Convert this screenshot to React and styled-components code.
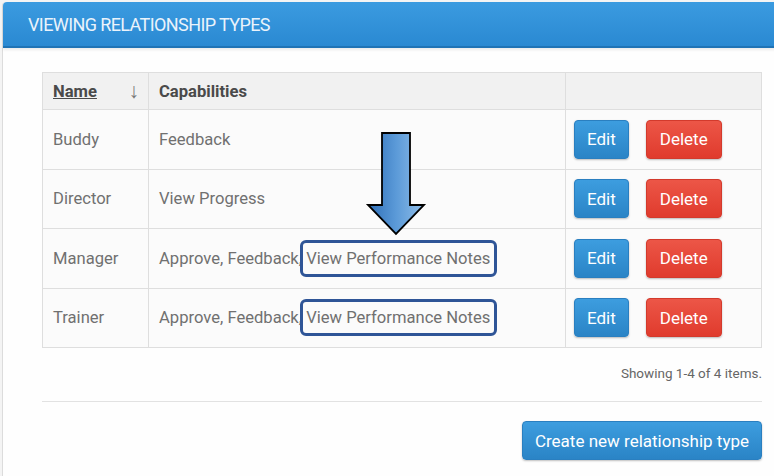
import React from "react";
import styled, { createGlobalStyle } from "styled-components";

const Global = createGlobalStyle`
  html, body { margin: 0; padding: 0; background: #f4f4f4; overflow: hidden; }
  body { font-family: Roboto, "Liberation Sans", sans-serif; }
`;

const Page = styled.div`
  width: 774px;
  height: 476px;
  overflow: hidden;
  padding: 2px 0 0 2px;
  box-sizing: border-box;
  position: relative;
`;

const Panel = styled.div`
  width: 800px;
  background: #fefefe;
  border-left: 1px solid #dcdcdc;
  border-radius: 4px 0 0 0;
  height: 480px;
`;

const Header = styled.div`
  height: 46px;
  box-sizing: border-box;
  background: linear-gradient(#3b9be0, #2a89d2);
  border-bottom: 2px solid #1f73b5;
  border-radius: 4px 0 0 0;
  color: #eaf3fb;
  font-size: 18px;
  letter-spacing: -0.6px;
  padding: 12px 0 0 25px;
  box-shadow: 0 2px 3px rgba(0,0,0,0.08);
`;

const Body = styled.div`
  padding: 24px 38px 0 39px;
  width: 720px;
`;

const Table = styled.table`
  width: 720px;
  border-collapse: collapse;
  font-size: 16.6px;
  color: #707070;
  background: #fbfbfb;
`;

const Th = styled.th`
  text-align: left;
  background: #f1f1f1;
  border: 1px solid #dedede;
  height: 36px;
  padding: 0 10px;
  color: #4a4a4a;
  font-weight: 700;
  width: ${(p) => p.$w || "auto"};
  position: relative;
`;

const SortLink = styled.span`
  text-decoration: underline;
`;

const SortArrow = styled.span`
  position: absolute;
  right: 9px;
  top: 6px;
  font-weight: 300;
  color: #777;
  font-size: 21px;
`;

const Td = styled.td`
  border: 1px solid #dedede;
  height: 58.5px;
  padding: 0 ${(p) => (p.$pl || 10)}px;
  white-space: nowrap;
`;

const Boxed = styled.span`
  position: relative;
  &::after {
    content: "";
    position: absolute;
    left: -6px;
    right: -7px;
    top: -9px;
    bottom: -9px;
    border: 3px solid #2f5597;
    border-radius: 6px;
  }
`;

const Btn = styled.button`
  font-family: Roboto, "Liberation Sans", sans-serif;
  font-size: 17px;
  color: #fff;
  border: 1px solid ${(p) => (p.$danger ? "#d33a2c" : "#2a7fc0")};
  border-radius: 4px;
  height: 39px;
  padding: 0 ${(p) => (p.$pad || 12)}px;
  background: ${(p) =>
    p.$danger
      ? "linear-gradient(#ec5647, #e03b2d)"
      : "linear-gradient(#3d9ddf, #2a84c6)"};
  box-shadow: 0 1px 2px rgba(0,0,0,0.25);
  margin-right: ${(p) => p.$mr || 0}px;
  cursor: pointer;
`;

const Summary = styled.div`
  text-align: right;
  font-size: 13.5px;
  color: #666;
  margin-top: 17px;
  height: 18px;
`;

const Rule = styled.div`
  border-top: 1px solid #e2e2e2;
  margin-top: 18px;
`;

const Footer = styled.div`
  display: flex;
  justify-content: flex-end;
  margin-top: 19px;
`;

const ArrowWrap = styled.div`
  position: absolute;
  left: 365px;
  top: 131px;
  width: 62px;
  height: 106px;
`;

const rows = [
  ["Buddy", "Feedback", false],
  ["Director", "View Progress", false],
  ["Manager", "Approve, Feedback,", true],
  ["Trainer", "Approve, Feedback,", true],
];

export default function App() {
  return (
    <>
      <Global />
      <Page>
        <Panel>
          <Header>VIEWING RELATIONSHIP TYPES</Header>
          <Body>
            <Table>
              <thead>
                <tr>
                  <Th $w="85px">
                    <SortLink>Name</SortLink>
                    <SortArrow>↓</SortArrow>
                  </Th>
                  <Th $w="396px">Capabilities</Th>
                  <Th />
                </tr>
              </thead>
              <tbody>
                {rows.map(([n, c, b]) => (
                  <tr key={n}>
                    <Td>{n}</Td>
                    <Td>
                      {c}
                      {b && (
                        <>
                          {" "}
                          <Boxed>View Performance Notes</Boxed>
                        </>
                      )}
                    </Td>
                    <Td $pl={8}>
                      <Btn $mr={17} $pad={12}>Edit</Btn>
                      <Btn $danger $pad={13}>Delete</Btn>
                    </Td>
                  </tr>
                ))}
              </tbody>
            </Table>
            <Summary>Showing 1-4 of 4 items.</Summary>
            <Rule />
            <Footer>
              <Btn $pad={12}>Create new relationship type</Btn>
            </Footer>
          </Body>
        </Panel>
        <ArrowWrap>
          <svg width="62" height="106" viewBox="0 0 62 106">
            <defs>
              <linearGradient id="ag" x1="0" x2="1" y1="0" y2="0">
                <stop offset="0" stopColor="#2f6fb8" />
                <stop offset="0.5" stopColor="#5b9ad8" />
                <stop offset="1" stopColor="#8fbde8" />
              </linearGradient>
            </defs>
            <path
              d="M17 2 H45 V74 H59 L31 103 L3 74 H17 Z"
              fill="url(#ag)"
              stroke="#000"
              strokeWidth="1.8"
              strokeLinejoin="miter"
            />
          </svg>
        </ArrowWrap>
      </Page>
    </>
  );
}
